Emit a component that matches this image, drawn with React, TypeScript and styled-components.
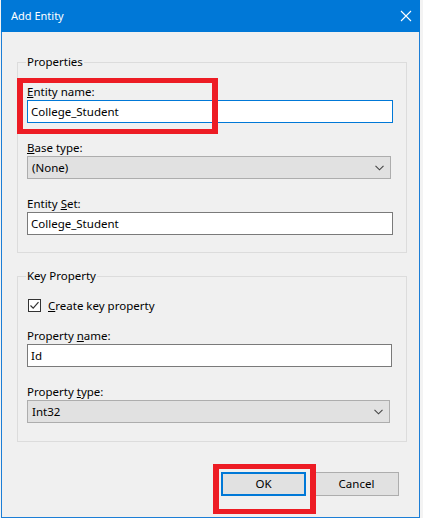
import React from "react";
import styled, { createGlobalStyle } from "styled-components";

const GlobalStyle = createGlobalStyle`
  html, body { margin: 0; padding: 0; background: #f3f3f3; }
  body { font-family: "Segoe UI", "Noto Sans", "Liberation Sans", sans-serif; font-size: 12px; color: #000; }
  * { box-sizing: border-box; }
`;

const FONT = `"Segoe UI", "Noto Sans", "Liberation Sans", sans-serif`;

const Window = styled.div`
  position: relative;
  margin-left: 1px;
  width: 419px;
  height: 518px;
  background: #f0f0f0;
  border: 1px solid #1c7ed6;
  border-top: none;
  display: flex;
  flex-direction: column;
  font-family: ${FONT};
  font-size: 11.5px;
`;

const TitleBar = styled.div`
  height: 32px;
  margin: 0 -1px;
  background: #0078d7;
  color: #fff;
  display: flex;
  align-items: center;
  justify-content: space-between;
  padding: 0 8px 0 10px;
  font-size: 11px;
`;

const Title = styled.span`
  line-height: 16px;
  padding-bottom: 1px;
`;

const CloseButton = styled.span`
  display: flex;
  width: 12px;
  height: 12px;
`;

const Body = styled.div`
  flex: 1;
  display: flex;
  flex-direction: column;
  padding: 22px 12px 20px 15px;
`;

const Group = styled.fieldset<{ $top?: number; $pt?: number; $pb?: number; $pr?: number }>`
  margin: ${(p) => p.$top ?? 0}px 0 0 0;
  padding: ${(p) => p.$pt ?? 14}px ${(p) => p.$pr ?? 13}px ${(p) => p.$pb ?? 17}px 9px;
  border: 1px solid #dcdcdc;
  min-width: 0;
`;

const Legend = styled.legend`
  padding: 0 1px;
  margin-left: -1px;
  line-height: 16px;
  height: 16px;
`;

const Field = styled.div<{ $gap?: number }>`
  display: flex;
  flex-direction: column;
  margin-top: ${(p) => p.$gap ?? 0}px;
`;

const Label = styled.label`
  height: 16px;
  line-height: 15px;
  u { text-decoration: underline; text-underline-offset: 1px; }
`;

const TextBox = styled.div<{ $focused?: boolean; $trim?: number }>`
  height: 23px;
  width: calc(100% - ${(p) => p.$trim ?? 0}px);
  background: #fff;
  border: 1px solid ${(p) => (p.$focused ? "#0078d7" : "#7a7a7a")};
  padding: 0 3px;
  display: flex;
  align-items: center;
  line-height: 16px;
`;

const Combo = styled.div<{ $trim?: number }>`
  height: 23px;
  width: calc(100% - ${(p) => p.$trim ?? 2}px);
  background: #e1e1e1;
  border: 1px solid #adadad;
  padding: 0 6px 0 4px;
  display: flex;
  align-items: center;
  justify-content: space-between;
  line-height: 16px;
`;

const CheckRow = styled.label`
  display: flex;
  align-items: center;
  gap: 7px;
  height: 15px;
  padding-left: 1px;
  u { text-decoration: underline; text-underline-offset: 1px; }
`;

const CheckBox = styled.span`
  width: 13px;
  height: 13px;
  border: 1px solid #333;
  background: #fff;
  display: flex;
  align-items: center;
  justify-content: center;
`;

const ButtonRow = styled.div`
  display: flex;
  justify-content: flex-end;
  gap: 8px;
  margin-top: 30px;
  padding-right: 8px;
`;

const Button = styled.div<{ $default?: boolean }>`
  width: 85px;
  height: 24px;
  background: #e1e1e1;
  border: ${(p) => (p.$default ? "2px solid #0078d7" : "1px solid #adadad")};
  display: flex;
  align-items: center;
  justify-content: center;
  line-height: 16px;
`;

const Annotation = styled.div<{ $x: number; $y: number; $w: number; $h: number }>`
  position: absolute;
  left: ${(p) => p.$x}px;
  top: ${(p) => p.$y}px;
  width: ${(p) => p.$w}px;
  height: ${(p) => p.$h}px;
  border: 5px solid #ed1c24;
  border-left-width: 6px;
  border-right-width: 6px;
  pointer-events: none;
`;

const Chevron = () => (
  <svg width="9" height="6" viewBox="0 0 9 6">
    <path d="M0.5 0.8 L4.5 4.8 L8.5 0.8" fill="none" stroke="#444" strokeWidth="1.1" />
  </svg>
);

export default function App() {
  return (
    <>
      <GlobalStyle />
      <Window>
        <TitleBar>
          <Title>Add Entity</Title>
          <CloseButton>
            <svg width="12" height="12" viewBox="0 0 12 12">
              <path d="M1 1 L11 11 M11 1 L1 11" stroke="#fff" strokeWidth="1.1" />
            </svg>
          </CloseButton>
        </TitleBar>
        <Body>
          <Group>
            <Legend>Properties</Legend>
            <Field>
              <Label>
                <u>E</u>ntity name:
              </Label>
              <TextBox $focused>College_Student</TextBox>
            </Field>
            <Field $gap={17}>
              <Label>
                <u>B</u>ase type:
              </Label>
              <Combo>
                <span>(None)</span>
                <Chevron />
              </Combo>
            </Field>
            <Field $gap={17}>
              <Label>
                Entity <u>S</u>et:
              </Label>
              <TextBox>College_Student</TextBox>
            </Field>
          </Group>
          <Group $top={15} $pb={18} $pr={14}>
            <Legend>Key Property</Legend>
            <CheckRow>
              <CheckBox>
                <svg width="11" height="11" viewBox="0 0 11 11">
                  <path d="M1.5 5.5 L4.2 8.2 L9.5 2.2" fill="none" stroke="#333" strokeWidth="1.2" />
                </svg>
              </CheckBox>
              <span>
                <u>C</u>reate key property
              </span>
            </CheckRow>
            <Field $gap={15}>
              <Label>
                Property <u>n</u>ame:
              </Label>
              <TextBox>Id</TextBox>
            </Field>
            <Field $gap={17}>
              <Label>
                Property <u>t</u>ype:
              </Label>
              <Combo>
                <span>Int32</span>
                <Chevron />
              </Combo>
            </Field>
          </Group>
          <ButtonRow>
            <Button $default>OK</Button>
            <Button>Cancel</Button>
          </ButtonRow>
        </Body>
        <Annotation $x={15} $y={78} $w={201} $h={56} />
        <Annotation $x={211} $y={464} $w={103} $h={50} />
      </Window>
    </>
  );
}
